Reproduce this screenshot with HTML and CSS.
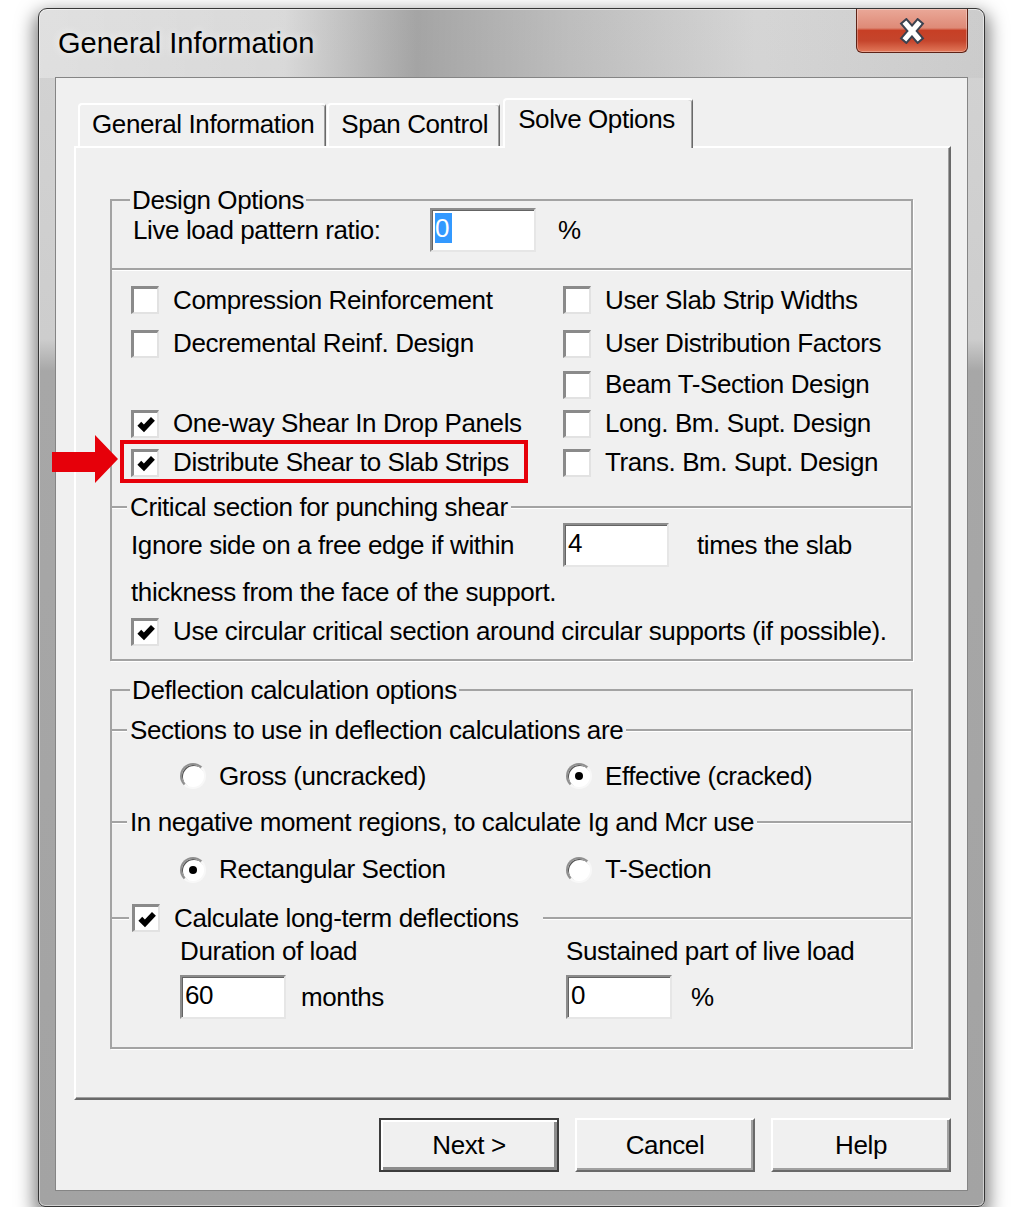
FILE: index.html
```html
<!DOCTYPE html>
<html>

<head>
  <meta charset="utf-8">
  <meta name="viewport" content="width=device-width">
  <title>General Information</title>
  <link rel="stylesheet" href="styles.css">
</head>

<body>

<div class="window">

  <div class="titlebar">
    <span class="title">General Information</span>
    <button class="close">
      <svg width="30" height="26" viewBox="0 0 30 26">
        <path d="M9 6 L21 20 M21 6 L9 20" stroke="#3b4250" stroke-width="9" stroke-linecap="square"/>
        <path d="M9 6 L21 20 M21 6 L9 20" stroke="#fff" stroke-width="5" stroke-linecap="square"/>
      </svg>
    </button>
  </div>

  <div class="client">

    <div class="tabs">
      <div class="tab">General Information</div>
      <div class="tab">Span Control</div>
      <div class="tab active">Solve Options</div>
    </div>

    <div class="panel">

      <!-- design options -->
      <fieldset class="group">
        <legend>Design Options</legend>
        <div class="row ratio">
          <span class="label">Live load pattern ratio:</span>
          <span class="field"><span class="sel">0</span></span>
          <span class="unit">%</span>
        </div>

        <div class="rule"></div>

        <div class="checks">
          <label class="check"><span class="box"></span>Compression Reinforcement</label>
          <label class="check"><span class="box"></span>User Slab Strip Widths</label>
          <label class="check"><span class="box"></span>Decremental Reinf. Design</label>
          <label class="check"><span class="box"></span>User Distribution Factors</label>
          <span></span>
          <label class="check"><span class="box"></span>Beam T-Section Design</label>
          <label class="check"><span class="box"><svg class="tick" viewBox="0 0 7 7"><path d="M0.9 3.4 L2.7 5.2 L6.2 1.5"/></svg></span>One-way Shear In Drop Panels</label>
          <label class="check"><span class="box"></span>Long. Bm. Supt. Design</label>
          <label class="check marked">
            <svg class="arrow" width="66" height="48" viewBox="0 0 66 48"><polygon points="0,17 43,17 43,0 66,24 43,48 43,37 0,37"/></svg>
            <span class="box"><svg class="tick" viewBox="0 0 7 7"><path d="M0.9 3.4 L2.7 5.2 L6.2 1.5"/></svg></span>Distribute Shear to Slab Strips
          </label>
          <label class="check"><span class="box"></span>Trans. Bm. Supt. Design</label>
        </div>

        <div class="head"><span>Critical section for punching shear</span></div>
        <div class="cols ignore">
          <span>Ignore side on a free edge if within</span>
          <span class="row"><span class="field">4</span><span class="after">times the slab</span></span>
        </div>
        <div class="cols thick">
          <span>thickness from the face of the support.</span>
        </div>
        <div class="cols circ">
          <label class="check"><span class="box"><svg class="tick" viewBox="0 0 7 7"><path d="M0.9 3.4 L2.7 5.2 L6.2 1.5"/></svg></span>Use circular critical section around circular supports (if possible).</label>
        </div>
      </fieldset>

      <!-- deflection options -->
      <fieldset class="group deflection">
        <legend>Deflection calculation options</legend>

        <div class="head"><span>Sections to use in deflection calculations are</span></div>
        <div class="cols2 radios first">
          <label class="opt"><span class="radio"></span>Gross (uncracked)</label>
          <label class="opt"><span class="radio on"></span>Effective (cracked)</label>
        </div>

        <div class="head"><span>In negative moment regions, to calculate Ig and Mcr use</span></div>
        <div class="cols2 radios second">
          <label class="opt"><span class="radio on"></span>Rectangular Section</label>
          <label class="opt"><span class="radio"></span>T-Section</label>
        </div>

        <div class="head long">
          <label class="check"><span class="box"><svg class="tick" viewBox="0 0 7 7"><path d="M0.9 3.4 L2.7 5.2 L6.2 1.5"/></svg></span>Calculate long-term deflections</label>
        </div>
        <div class="cols2 captions">
          <span>Duration of load</span>
          <span>Sustained part of live load</span>
        </div>
        <div class="cols2 inputs">
          <span class="row"><span class="field">60</span><span class="months">months</span></span>
          <span class="row"><span class="field">0</span><span class="pct">%</span></span>
        </div>
      </fieldset>

    </div>

    <div class="buttons">
      <button class="btn default">Next &gt;</button>
      <button class="btn">Cancel</button>
      <button class="btn">Help</button>
    </div>

  </div>
</div>

</body>

</html>
```

FILE: styles.css
```css
* {
  box-sizing: border-box;
}

body {
  margin: 0;
  background: #fff;
  color: #000;
  font-family: "Liberation Sans", Arial, sans-serif;
  font-size: 26px;
  letter-spacing: -0.4px;
}

/* window frame */
.window {
  margin: 8px 0 0 38px;
  width: 947px;
  height: 1199px;
  display: flex;
  flex-direction: column;
  padding: 0 16px 15px 16px;
  border: 1px solid #363636;
  border-radius: 9px 9px 7px 7px;
  background:
    linear-gradient(90deg, rgba(255,255,255,.3), rgba(255,255,255,.15) 26%, rgba(0,0,0,.22) 40%, rgba(0,0,0,.1) 56%, rgba(255,255,255,.05) 76%, rgba(0,0,0,.03)) top / 100% 69px no-repeat,
    linear-gradient(#d3d3d3, #cdcdcd 330px, #a7a7a7 362px, #a3a3a3);
  box-shadow: 0 8px 18px 4px rgba(0,0,0,.5), inset 0 0 0 1px rgba(255,255,255,.5);
}

.titlebar {
  height: 68px;
  display: flex;
  align-items: flex-start;
}

.title {
  margin: 17px 0 0 3px;
  font-size: 29px;
  line-height: 34px;
  letter-spacing: 0;
  text-shadow: 0 0 8px rgba(255,255,255,.9);
}

.close {
  margin-left: auto;
  width: 112px;
  height: 44px;
  padding: 0;
  display: flex;
  align-items: center;
  justify-content: center;
  border: 1px solid #5e2216;
  border-top: 0;
  border-radius: 0 0 6px 6px;
  background: linear-gradient(#eaa898, #de8a77 44%, #c73f25 50%, #c5452c 74%, #e2785a);
  box-shadow: inset 0 0 0 1px rgba(255,255,255,.3);
}

.client {
  flex: 1;
  display: flex;
  flex-direction: column;
  padding: 20px 16px 18px 18px;
  background: #f0f0f0;
  border: 1px solid #858585;
}

/* tab strip */
.tabs {
  height: 48px;
  display: flex;
  align-items: flex-end;
  padding-left: 4px;
}

.tab {
  height: 43px;
  display: flex;
  align-items: center;
  padding: 0 11px 2px 12px;
  border: 2px solid #fff;
  border-bottom: 0;
  border-right: 1px solid #696969;
  border-radius: 4px 4px 0 0;
  box-shadow: inset -1px 0 0 #a0a0a0;
}

.tab + .tab {
  margin-left: 1px;
}

.tab.active {
  position: relative;
  z-index: 1;
  height: 50px;
  margin: 0 0 -2px 3px;
  padding: 0 17px 10px 13px;
  background: #f0f0f0;
}

.panel {
  flex: 1;
  padding: 44px 36px 0 34px;
  border: 2px solid;
  border-color: #fff #696969 #696969 #fff;
  box-shadow: inset -1px -1px 0 #a0a0a0;
}

/* group boxes */
.group {
  margin: 0;
  min-width: 0;
  padding: 0 0 13px;
  border: 2px solid #a3a3a3;
  box-shadow: 1px 1px 0 #fff;
}

.group legend {
  margin-left: 18px;
  padding: 0 2px;
  line-height: 16px;
}

.deflection {
  margin-top: 21px;
  padding-bottom: 28px;
}

.row {
  display: flex;
  align-items: center;
}

.ratio {
  height: 44px;
  padding-left: 21px;
}

.ratio .label {
  width: 297px;
}

.ratio .unit {
  margin-left: 22px;
}

.rule {
  margin-top: 16px;
  border-top: 2px solid #a3a3a3;
  border-bottom: 1px solid #fff;
}

.head {
  height: 26px;
  display: flex;
  align-items: center;
  margin-top: 12px;
}

.head::before,
.head::after {
  content: "";
  border-top: 2px solid #a3a3a3;
  border-bottom: 1px solid #fff;
}

.head::before {
  width: 15px;
}

.head::after {
  flex: 1;
}

.head > span {
  padding: 0 3px;
}

.deflection .head {
  margin-top: 0;
}

.deflection .head:first-of-type {
  margin-top: 19px;
}

.head.long {
  height: 28px;
}

.head.long::before {
  width: 17px;
}

.head.long .check {
  margin-left: 3px;
  padding-right: 24px;
}

/* checkbox grid */
.checks {
  display: grid;
  grid-template-columns: 432px 1fr;
  grid-template-rows: 44px 43px 39px 39px 39px;
  align-items: center;
  padding: 7px 0 0 19px;
}

.check {
  display: flex;
  align-items: center;
  gap: 14px;
  white-space: nowrap;
}

.box {
  width: 28px;
  height: 28px;
  flex: none;
  display: flex;
  align-items: center;
  justify-content: center;
  background: #fff;
  border-style: solid;
  border-width: 3px 2px 2px 3px;
  border-color: #8a8a8a #e2e2e2 #e2e2e2 #8a8a8a;
}

.tick {
  width: 18px;
  height: 18px;
}

.tick path {
  fill: none;
  stroke: #000;
  stroke-width: 2.1;
}

/* the highlighted option */
.marked {
  position: relative;
  align-self: stretch;
}

.marked::before {
  content: "";
  position: absolute;
  left: -11px;
  top: -3px;
  bottom: -1px;
  width: 400px;
  border: 4px solid #e6000a;
}

.arrow {
  position: absolute;
  left: -79px;
  top: -8px;
  fill: #e6000a;
}

.cols {
  display: grid;
  grid-template-columns: 432px 1fr;
  align-items: center;
  padding-left: 19px;
}

.ignore {
  height: 46px;
  margin-top: 2px;
}

.thick {
  height: 48px;
}

.circ {
  height: 30px;
}

.after {
  margin-left: 28px;
}

.cols2 {
  display: grid;
  grid-template-columns: 386px 1fr;
  align-items: center;
  padding-left: 68px;
}

.radios.first {
  height: 66px;
}

.radios.second {
  height: 69px;
}

.captions {
  height: 38px;
}

.inputs {
  height: 44px;
  margin-top: 5px;
}

.months {
  margin-left: 15px;
}

.pct {
  margin-left: 19px;
}

.opt {
  display: flex;
  align-items: center;
  gap: 13px;
}

.radio {
  width: 26px;
  height: 26px;
  flex: none;
  display: flex;
  align-items: center;
  justify-content: center;
  border-radius: 50%;
  background: #fff;
  border: 2px solid;
  border-color: #8f8f8f #f8f8f8 #f8f8f8 #8f8f8f;
  box-shadow: inset 1px 1px 0 #555;
}

.radio.on::after {
  content: "";
  width: 8px;
  height: 8px;
  border-radius: 50%;
  background: #000;
}

/* edit boxes */
.field {
  width: 106px;
  height: 44px;
  flex: none;
  padding: 3px 3px 0;
  line-height: 30px;
  background: #fff;
  border: 2px solid;
  border-color: #8c8c8c #e6e6e6 #e6e6e6 #8c8c8c;
  box-shadow: inset 1px 1px 0 #646464;
}

.sel {
  padding-right: 3px;
  background: #3399ff;
  color: #fff;
}

/* dialog buttons */
.buttons {
  display: flex;
  justify-content: flex-end;
  gap: 16px;
  margin-top: 18px;
}

.btn {
  width: 180px;
  height: 54px;
  padding: 0;
  font: inherit;
  letter-spacing: inherit;
  color: #000;
  background: #f0f0f0;
  border: 2px solid;
  border-color: #fff #696969 #696969 #fff;
  box-shadow: inset -2px -2px 0 #a0a0a0;
}

.btn.default {
  border-color: #3c3c3c;
  box-shadow: inset 2px 2px 0 #fff, inset -3px -3px 0 #8c8c8c;
}
```
